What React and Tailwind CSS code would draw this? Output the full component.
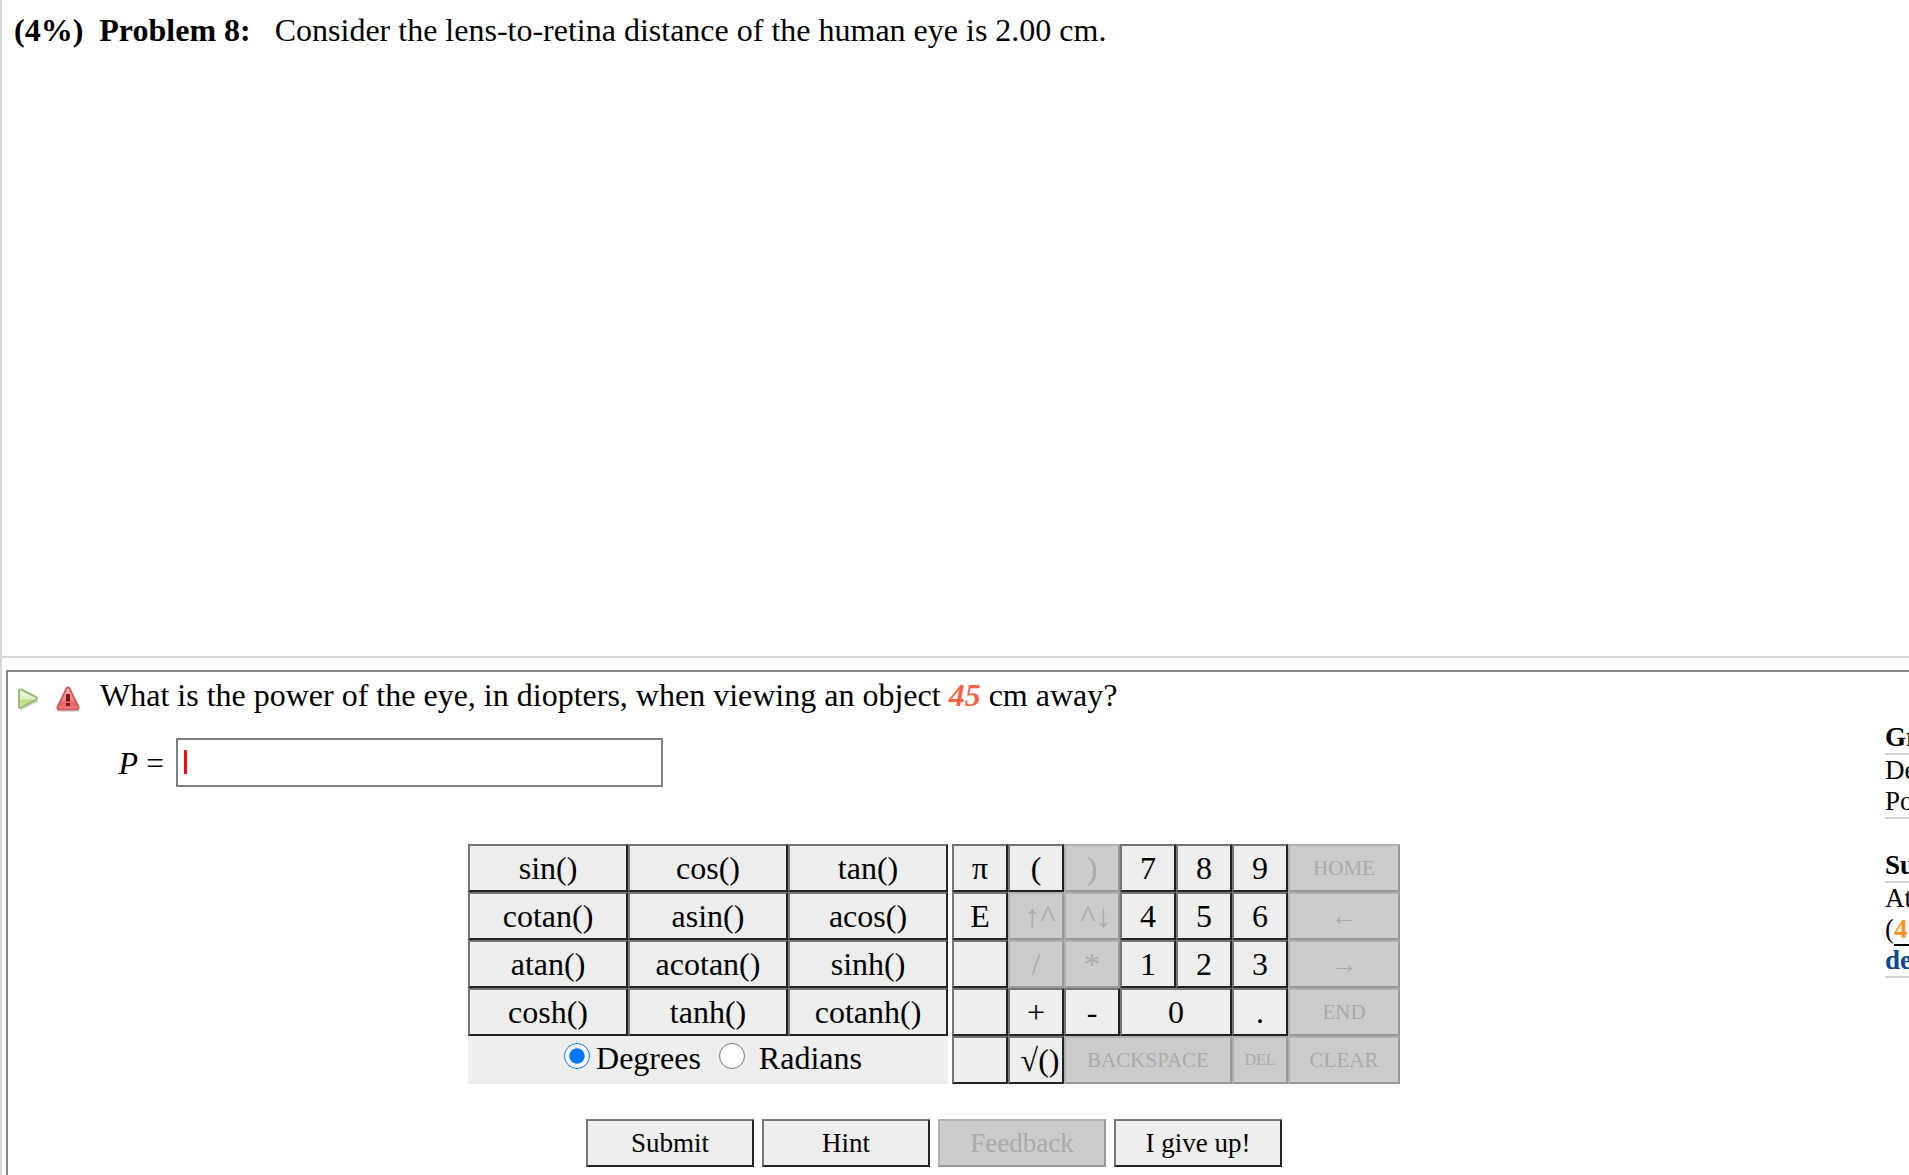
import React, { useState } from "react";

const TRIG_KEYS = [
  "sin()", "cos()", "tan()",
  "cotan()", "asin()", "acos()",
  "atan()", "acotan()", "sinh()",
  "cosh()", "tanh()", "cotanh()",
];

// one entry per key, in reading order
const PAD_KEYS = [
  { text: "π" },
  { text: "(" },
  { text: ")", off: true },
  { text: "7" },
  { text: "8" },
  { text: "9" },
  { text: "HOME", off: true, span: "col-span-2", size: "text-[21px]" },

  { text: "E" },
  { text: "↑^", off: true, span: "pl-2" },
  { text: "^↓", off: true, span: "pl-2" },
  { text: "4" },
  { text: "5" },
  { text: "6" },
  { text: "←", off: true, span: "col-span-2", size: "text-[27px]" },

  { text: "" },
  { text: "/", off: true },
  { text: "*", off: true },
  { text: "1" },
  { text: "2" },
  { text: "3" },
  { text: "→", off: true, span: "col-span-2", size: "text-[27px]" },

  { text: "" },
  { text: "+" },
  { text: "-" },
  { text: "0", span: "col-span-2" },
  { text: "." },
  { text: "END", off: true, span: "col-span-2", size: "text-[21px]" },

  { text: "" },
  { text: "√()", span: "pl-2" },
  { text: "BACKSPACE", off: true, span: "col-span-3", size: "text-[21px]" },
  { text: "DEL", off: true, size: "text-base" },
  { text: "CLEAR", off: true, span: "col-span-2", size: "text-[21px]" },
];

function Key({ text, off, span = "", size = "text-[32px]", onClick }) {
  const colors = off
    ? "bg-[#ccc] text-[#aaa] border-t-[#b0b0b0] border-l-[#b0b0b0] border-r-[#999] border-b-[#999]"
    : "bg-[#eee] text-black border-t-[#767676] border-l-[#767676] border-r-[#222] border-b-[#222]";

  return (
    <button
      type="button"
      disabled={off}
      aria-label={text || "blank"}
      onClick={onClick}
      className={`flex h-12 items-center justify-center border-2 leading-none whitespace-nowrap ${colors} ${size} ${span}`}
    >
      {text}
    </button>
  );
}

function PlayIcon() {
  return (
    <svg className="h-7 w-6" viewBox="0 -2 24 28" aria-hidden="true">
      <defs>
        <linearGradient id="play" x1="0" y1="0" x2="0" y2="1">
          <stop offset="0" stopColor="#eef6dd" />
          <stop offset="0.5" stopColor="#e2f0c6" />
          <stop offset="0.6" stopColor="#bfe07f" />
          <stop offset="1" stopColor="#d9efae" />
        </linearGradient>
      </defs>
      <path d="M5 22 L21 14" stroke="#ddd" strokeWidth="3" strokeLinecap="round" />
      <path d="M3 4 Q3 2 5 2.5 L20 10 Q22 11.5 20 13 L5 20.5 Q3 21 3 19.5 Z" fill="url(#play)" stroke="#9dbb78" strokeWidth="2" strokeLinejoin="round" />
    </svg>
  );
}

function WarningIcon() {
  return (
    <svg className="h-7 w-6" viewBox="0 0 24 28" aria-hidden="true">
      <defs>
        <linearGradient id="warn" x1="0" y1="0" x2="0" y2="1">
          <stop offset="0" stopColor="#f8c9c9" />
          <stop offset="0.5" stopColor="#ee9090" />
          <stop offset="0.75" stopColor="#e85f62" />
          <stop offset="1" stopColor="#f28a8a" />
        </linearGradient>
      </defs>
      <path d="M2 26 H22" stroke="#ddd" strokeWidth="2" strokeLinecap="round" />
      <path d="M10.5 3.5 Q12 1 13.5 3.5 L17.5 12 L22.5 22 Q23 24.5 20.5 24.5 H3.5 Q1 24.5 1.5 22 L6.5 12 Z" fill="url(#warn)" stroke="#d65a5e" strokeWidth="2" strokeLinejoin="round" />
      <path d="M12 9 V16.5 M12 18 V21" stroke="#7e1519" strokeWidth="4" />
    </svg>
  );
}

function App() {
  const [answer, setAnswer] = useState("");
  const [unit, setUnit] = useState("degrees");

  return (
    <div className="flex min-h-screen flex-col overflow-hidden border-l-2 border-[#d8d8d8] bg-white font-['Liberation_Serif','Times_New_Roman',serif] text-[32px] leading-9 text-black">

      {/* PROBLEM */}
      <header className="h-[658px] border-b-2 border-[#d8d8d8] pt-3 pl-3">
        <h1 className="whitespace-pre">
          <b>(4%)  Problem 8:</b>
          {"   Consider the lens-to-retina distance of the human eye is 2.00 cm."}
        </h1>
      </header>

      {/* QUESTION */}
      <main className="mt-3 ml-1 flex flex-1 border-t-2 border-l-2 border-[#888]">
        <div className="min-w-0 flex-1">
          <div className="flex items-end pt-[5px] pl-2">
            <PlayIcon />
            <span className="ml-4">
              <WarningIcon />
            </span>
            <p className="ml-5">
              What is the power of the eye, in diopters, when viewing an object{" "}
              <b className="text-[#ff6347] italic">45</b> cm away?
            </p>
          </div>

          <div className="mt-[25px] flex items-center">
            <label htmlFor="answer" className="w-[168px] pr-3 text-right">
              <i>P</i> =
            </label>
            <div className="relative">
              <input
                id="answer"
                type="text"
                value={answer}
                onChange={(e) => setAnswer(e.target.value)}
                className="block h-[49px] w-[487px] border-2 border-[#808080] bg-white px-2 caret-red-600 outline-none"
              />
              {answer === "" && (
                <span className="pointer-events-none absolute top-3 left-2 h-6 w-[3px] bg-[#f00]" />
              )}
            </div>
          </div>

          {/* KEYPAD */}
          <div className="mt-[57px] flex justify-center gap-1">
            <div className="w-[480px] bg-[#eee]">
              <div className="grid grid-cols-3">
                {TRIG_KEYS.map((name) => (
                  <Key key={name} text={name} onClick={() => setAnswer(answer + name)} />
                ))}
              </div>
              <div className="flex h-12 items-start justify-center gap-[18px] pt-1 pl-[10px]">
                <label className="flex items-center gap-[6px]">
                  <input
                    type="radio"
                    name="unit"
                    checked={unit === "degrees"}
                    onChange={() => setUnit("degrees")}
                    className="mb-1 h-[26px] w-[26px] accent-[#0075ff]"
                  />
                  Degrees
                </label>
                <label className="flex items-center gap-[14px]">
                  <input
                    type="radio"
                    name="unit"
                    checked={unit === "radians"}
                    onChange={() => setUnit("radians")}
                    className="mb-1 h-[26px] w-[26px] accent-[#0075ff]"
                  />
                  Radians
                </label>
              </div>
            </div>

            <div className="grid w-[448px] grid-cols-8">
              {PAD_KEYS.map((k, i) => (
                <Key key={i} {...k} onClick={() => setAnswer(answer + k.text)} />
              ))}
            </div>
          </div>

          {/* ACTIONS */}
          <div className="mt-[35px] flex justify-center gap-2">
            <Key text="Submit" size="text-[27px]" span="w-[168px]" />
            <Key text="Hint" size="text-[27px]" span="w-[168px]" />
            <Key text="Feedback" size="text-[27px]" span="w-[168px]" off />
            <Key text="I give up!" size="text-[27px]" span="w-[168px]" />
          </div>
        </div>

        {/* GRADE SUMMARY */}
        <aside className="ml-[25px] w-6 overflow-hidden pt-[50px] text-[27px] leading-[31px] whitespace-nowrap">
          <h2 className="border-b-2 border-[#d3d3d3] font-bold">Grade</h2>
          <div className="border-b-2 border-[#d3d3d3]">
            <p>Deductions</p>
            <p>Potential</p>
          </div>
          <h2 className="mt-[31px] border-b-2 border-[#d3d3d3] font-bold">Submissions</h2>
          <div className="border-b-2 border-[#d3d3d3]">
            <p>Attempts</p>
            <p>
              (<b className="border-b-2 border-black text-[#ff9320]">4%</b>
            </p>
            <a href="#detail" className="font-bold text-[#0b4a8f]">detailed</a>
          </div>
        </aside>
      </main>

    </div>
  );
}

export default App;
